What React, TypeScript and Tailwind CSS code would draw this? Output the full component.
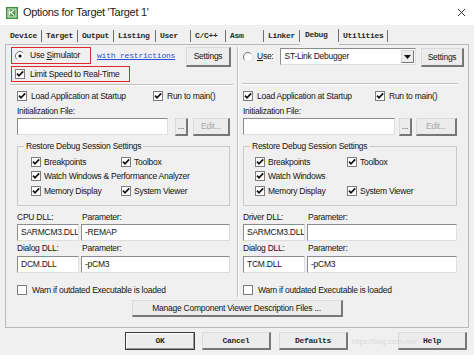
import React from "react";

function Check({ on = true }: { on?: boolean }) {
  return (
    <svg width="10" height="10" viewBox="0 0 10 10" className="shrink-0">
      <rect x="0.5" y="0.5" width="9" height="9" fill="#ffffff" stroke="#7d7d7d" />
      {on && <path d="M2 4.6 L4 6.8 L8.2 2.3" fill="none" stroke="#111111" strokeWidth="1.7" />}
    </svg>
  );
}

function Radio({ on = false }: { on?: boolean }) {
  return (
    <svg width="10" height="10" viewBox="0 0 10 10" className="shrink-0">
      <circle cx="5" cy="5" r="4.5" fill="#ffffff" />
      <path d="M8.2 1.8 A4.5 4.5 0 1 0 1.8 8.2" fill="none" stroke="#6f6f6f" strokeWidth="1" />
      <path d="M8.2 1.8 A4.5 4.5 0 0 1 1.8 8.2" fill="none" stroke="#e2e2e2" strokeWidth="1" />
      {on && <circle cx="5" cy="5" r="1.6" fill="#111111" />}
    </svg>
  );
}

function Btn({ className = "", children }: { className?: string; children?: React.ReactNode }) {
  return (
    <div
      className={`flex items-center justify-center shrink-0 whitespace-nowrap bg-[#ececec] border border-[#dadada] border-r-2 border-b-2 border-r-[#777777] border-b-[#777777] ${className}`}
    >
      {children}
    </div>
  );
}

function Field({ className = "", children }: { className?: string; children?: React.ReactNode }) {
  return (
    <div
      className={`flex items-center shrink-0 overflow-hidden whitespace-nowrap pl-[3px] bg-white border border-[#dedede] border-t-[#8c8c8c] border-l-[#8c8c8c] ${className}`}
    >
      {children}
    </div>
  );
}

function Sep({ className = "" }: { className?: string }) {
  return (
    <div className={className}>
      <div className="h-px bg-[#c0c0c0]" />
      <div className="h-px bg-white" />
    </div>
  );
}

type LowerProps = {
  pad: string;
  runW: string;
  inputW: string;
  dotsCls: string;
  editCls: string;
  groupW: string;
  groupPad: string;
  toolW: string;
  watch: string;
  dllLabel: string;
  dll: string;
  param1: string;
  dlg: string;
  in2W: string;
  top: string;
};

function Lower(p: LowerProps) {
  return (
    <div className={`flex flex-col ${p.pad} ${p.top}`}>
      <div className="h-[14px] flex items-center">
        <div className={`flex items-center ${p.runW}`}>
          <Check />
          <span className="ml-[4px]">Load Application at Startup</span>
        </div>
        <Check />
        <span className="ml-[4px]">Run to main()</span>
      </div>
      <div className="mt-[2px] h-[12px] flex items-center">Initialization File:</div>
      <div className="mt-[1px] h-[17px] flex">
        <Field className={p.inputW} />
        <Btn className={`h-[18px] text-[#555555] ${p.dotsCls}`}>...</Btn>
        <Btn className={`h-[18px] text-[#a8a8a8] ${p.editCls}`}>Edit...</Btn>
      </div>
      <div className={`mt-[11px] h-[60px] border border-[#c9c9c9] flex flex-col ${p.groupW}`}>
        <div className="-mt-[7px] ml-[6px] px-[2px] bg-[#f0f0f0] self-start h-[12px] flex items-center">
          Restore Debug Session Settings
        </div>
        <div className={`flex flex-col ${p.groupPad}`}>
          <div className="mt-[3px] h-[14px] flex items-center">
            <div className={`flex items-center ${p.toolW}`}>
              <Check />
              <span className="ml-[3px]">Breakpoints</span>
            </div>
            <Check />
            <span className="ml-[3px]">Toolbox</span>
          </div>
          <div className="h-[14px] flex items-center">
            <Check />
            <span className="ml-[3px]">{p.watch}</span>
          </div>
          <div className="mt-[1px] h-[14px] flex items-center">
            <div className={`flex items-center ${p.toolW}`}>
              <Check />
              <span className="ml-[3px]">Memory Display</span>
            </div>
            <Check />
            <span className="ml-[3px]">System Viewer</span>
          </div>
        </div>
      </div>
      <div className="mt-[5px] h-[12px] flex items-center">
        <span className="w-[65px]">{p.dllLabel}</span>
        <span>Parameter:</span>
      </div>
      <div className="mt-[1px] h-[17px] flex">
        <Field className="w-[62px]">{p.dll}</Field>
        <Field className={`ml-[2px] ${p.in2W}`}>{p.param1}</Field>
      </div>
      <div className="mt-[1px] h-[12px] flex items-center">
        <span className="w-[65px]">Dialog DLL:</span>
        <span>Parameter:</span>
      </div>
      <div className="mt-[2px] h-[17px] flex">
        <Field className="w-[62px]">{p.dlg}</Field>
        <Field className={`ml-[2px] ${p.in2W}`}>-pCM3</Field>
      </div>
      <div className="mt-[10px] h-[14px] flex items-center">
        <Check on={false} />
        <span className="ml-[5px]">Warn if outdated Executable is loaded</span>
      </div>
    </div>
  );
}

const tabs: { label: string; w: string }[] = [
  { label: "Device", w: "w-[36px]" },
  { label: "Target", w: "w-[36px]" },
  { label: "Output", w: "w-[36px]" },
  { label: "Listing", w: "w-[42px]" },
  { label: "User", w: "w-[35px]" },
  { label: "C/C++", w: "w-[35px]" },
  { label: "Asm", w: "w-[38px]" },
  { label: "Linker", w: "w-[36px]" },
];

export default function App() {
  return (
    <div className="w-[474px] h-[355px] bg-[#f0f0f0] relative overflow-hidden whitespace-nowrap text-[#141414] text-[8.5px] tracking-[-0.25px] leading-none font-['Liberation_Sans',Arial,sans-serif]">
      {/* title bar */}
      <div className="h-[25px] bg-white flex items-center">
        <svg width="12" height="12" viewBox="0 0 12 12" className="ml-[6px] shrink-0">
          <rect x="0" y="0" width="12" height="12" fill="#3d8f3f" />
          <rect x="1.5" y="1.5" width="9" height="9" fill="#e8f2e0" />
          <rect x="2.5" y="2.5" width="7" height="7" fill="#4c9a45" />
          <path d="M3.5 3.5 L3.5 8.5 M3.7 6 L8 3.3 M4.8 5.4 L8.3 8.6" stroke="#ffffff" strokeWidth="1.2" fill="none" />
        </svg>
        <span className="ml-[5px] text-[11px] tracking-[-0.3px] text-[#222222]">
          Options for Target 'Target 1'
        </span>
        <svg width="9" height="9" viewBox="0 0 9 9" className="ml-auto mr-[8px]">
          <path d="M1 1 L8 8 M8 1 L1 8" stroke="#333333" strokeWidth="1" />
        </svg>
      </div>

      {/* tabs */}
      <div className="h-[19px] flex items-end pl-[6px] font-['Liberation_Mono','DejaVu_Sans_Mono',monospace] font-bold text-[8px] tracking-[-0.3px] text-[#2a2a2a]">
        {tabs.map((t) => (
          <div key={t.label} className={`h-[16px] flex items-center pl-[4px] ${t.w}`}>
            <span className="grow">{t.label}</span>
            <span className="w-px h-[12px] bg-[#6e6e6e]" />
          </div>
        ))}
        <div className="w-[39px] h-[18px] flex items-center pl-[5px] pb-[2px] relative z-10 -mb-px bg-[#f0f0f0]">
          <span className="grow">Debug</span>
          <span className="w-px h-[13px] bg-[#6e6e6e]" />
        </div>
        <div className="w-[49px] h-[16px] flex items-center pl-[4px]">
          <span className="grow">Utilities</span>
          <span className="w-px h-[12px] bg-[#6e6e6e]" />
        </div>
      </div>

      {/* panel */}
      <div className="ml-[5px] w-[464px] h-[284px] border border-[#b8b8b8] bg-[#f0f0f0] flex flex-col">
        <div className="h-[252px] flex">
          {/* left column */}
          <div className="ml-[4px] w-[223px] flex flex-col">
            <div className="mt-[2px] h-[19px] flex items-start">
              <div className="ml-[1px] w-[80px] h-[17px] border-[1.5px] border-[#de2a2e] flex items-center pl-[3px]">
                <Radio on />
                <span className="ml-[5px]">
                  Use <span className="underline">S</span>imulator
                </span>
              </div>
              <span className="ml-[6px] mt-[5px] text-[#2d4fd6] underline font-['Liberation_Mono','DejaVu_Sans_Mono',monospace] text-[8px] tracking-[-0.2px]">
                with restrictions
              </span>
              <Btn className="ml-auto mr-[2px] w-[45px] h-[20px]">Settings</Btn>
            </div>
            <div className="h-[16px] flex">
              <div className="ml-[1px] w-[119px] h-[16px] border-[1.5px] border-[#de2a2e] flex items-center pl-[3px]">
                <Check />
                <span className="ml-[5px]">Limit Speed to Real-Time</span>
              </div>
            </div>
            <Sep className="mt-[2px]" />
            <Lower
              top="mt-[3px]"
              pad="pl-[7px]"
              runW="w-[136px]"
              inputW="w-[151px]"
              dotsCls="ml-[7px] w-[13px]"
              editCls="ml-[5px] w-[37px]"
              groupW="w-[213px]"
              groupPad="pl-[13px]"
              toolW="w-[90px]"
              watch="Watch Windows & Performance Analyzer"
              dllLabel="CPU DLL:"
              dll="SARMCM3.DLL"
              param1="-REMAP"
              dlg="DCM.DLL"
              in2W="w-[149px]"
            />
          </div>

          {/* divider */}
          <div className="ml-[4px] mt-[2px] h-[250px] flex">
            <div className="w-px bg-[#c0c0c0]" />
            <div className="w-px bg-white" />
          </div>

          {/* right column */}
          <div className="ml-[3px] w-[222px] flex flex-col">
            <div className="mt-[3px] h-[19px] flex items-start pl-[1px]">
              <div className="h-[17px] flex items-center">
                <Radio />
                <span className="ml-[4px]">
                  <span className="underline">U</span>se:
                </span>
              </div>
              <div className="ml-[7px] w-[138px] h-[17px] bg-white border border-[#dedede] border-t-[#8c8c8c] border-l-[#8c8c8c] flex items-center pl-[3px]">
                <span className="grow">ST-Link Debugger</span>
                <div className="w-[13px] h-[13px] mr-px bg-[#ececec] border border-[#dadada] border-r-[#777777] border-b-[#777777] flex items-center justify-center">
                  <svg width="7" height="4" viewBox="0 0 7 4">
                    <path d="M0 0 L7 0 L3.5 4 Z" fill="#111111" />
                  </svg>
                </div>
              </div>
              <Btn className="ml-[5px] w-[43px] h-[19px]">Settings</Btn>
            </div>
            <Sep className="mt-[16px] w-[216px]" />
            <Lower
              top="mt-[4px]"
              pad="pl-[1px]"
              runW="w-[132px]"
              inputW="w-[152px]"
              dotsCls="ml-[4px] w-[13px]"
              editCls="ml-[4px] w-[41px]"
              groupW="w-[214px]"
              groupPad="pl-[11px]"
              toolW="w-[92px]"
              watch="Watch Windows"
              dllLabel="Driver DLL:"
              dll="SARMCM3.DLL"
              param1=""
              dlg="TCM.DLL"
              in2W="w-[150px]"
            />
          </div>
        </div>
        <Btn className="mt-[3px] mx-auto w-[211px] h-[17px]">Manage Component Viewer Description Files ...</Btn>
      </div>

      {/* bottom buttons */}
      <div className="mt-[4px] h-[18px] flex font-['Liberation_Mono','DejaVu_Sans_Mono',monospace] font-bold text-[8px] tracking-[-0.3px] text-[#2a2a2a]">
        <div className="ml-[125px] w-[70px] h-[18px] border border-[#3a3a3a] flex">
          <div className="grow flex items-center justify-center bg-[#ececec] border border-[#ffffff] border-r-[#9a9a9a] border-b-[#9a9a9a]">
            OK
          </div>
        </div>
        <Btn className="ml-[7px] w-[69px] h-[18px]">Cancel</Btn>
        <Btn className="ml-[8px] w-[69px] h-[18px]">Defaults</Btn>
        <Btn className="ml-[50px] w-[69px] h-[18px]">Help</Btn>
      </div>

      <div className="absolute left-[352px] top-[338px] text-[7px] tracking-normal text-[#dadada]">
        https://blog.csdn.net/
      </div>
    </div>
  );
}
